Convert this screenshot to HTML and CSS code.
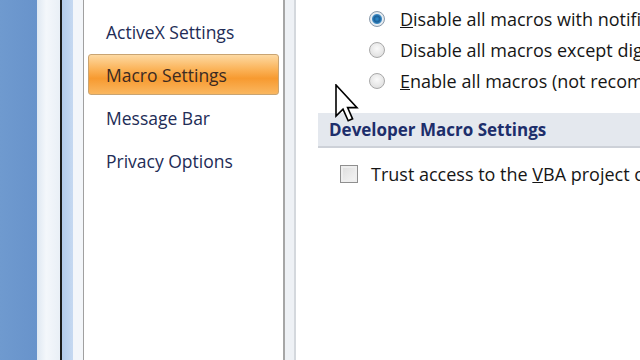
FILE: index.html
```html
<!DOCTYPE html>
<html>
<head>
<meta charset="utf-8">
<link rel="stylesheet" href="styles.css">
</head>
<body>
<div class="screen">
  <div class="desk"></div>
  <div class="frame"></div>
  <div class="darkline"></div>
  <div class="bluestrip"></div>
  <div class="gap"></div>
  <nav class="nav">
    <div class="nav-item">ActiveX Settings</div>
    <div class="nav-item active">Macro Settings</div>
    <div class="nav-item">Message Bar</div>
    <div class="nav-item">Privacy Options</div>
  </nav>
  <div class="splitter"></div>
  <main class="content">
    <div class="radios">
      <div class="radio-row"><span class="radio checked"></span><span class="label"><u>D</u>isable all macros with notifi</span></div>
      <div class="radio-row"><span class="radio"></span><span class="label">Disable all macros except digi</span></div>
      <div class="radio-row"><span class="radio"></span><span class="label"><u>E</u>nable all macros (not recomm</span></div>
    </div>
    <div class="section-head">Developer Macro Settings</div>
    <div class="check-row"><span class="checkbox"></span><span class="label">Trust access to the <u>V</u>BA project o</span></div>
  </main>
  <svg class="cursor" width="24" height="38" viewBox="0 0 12 19">
    <path d="M0.5 0.5 L0.5 16 L4 12.6 L6.6 18.4 L8.8 17.4 L6.3 11.8 L11 11.8 Z" fill="#fff" stroke="#000" stroke-width="0.8" stroke-linejoin="miter"/>
  </svg>
</div>
</body>
</html>
```
FILE: styles.css
```css
html, body { margin: 0; padding: 0; }
body { width: 640px; height: 360px; overflow: hidden; background: #fff; font-family: "Open Sans", "Noto Sans", sans-serif; }
.screen { position: relative; display: flex; height: 360px; }
.desk { width: 37px; background: linear-gradient(90deg, #6f9acf, #6893cb); }
.frame { width: 23px; background: linear-gradient(90deg, #dfe8f2, #f4f7fb 40%, #e9eff6); }
.darkline { width: 2px; background: #1c1c1c; }
.bluestrip { width: 11px; background: linear-gradient(90deg, #b3cbea, #c6d9f1); }
.gap { width: 10px; background: #f3f6fa; }
.nav { width: 199px; background: #fff; border-left: 1px solid #a0a0a0; border-right: 2px solid #a6a6a6; padding-top: 10px; box-sizing: content-box; }
.nav-item { height: 43px; display: flex; align-items: center; padding-left: 18px; margin: 0 4px 0 4px; font-size: 17.5px; color: #222c56; box-sizing: border-box; }
.nav-item.active { background: linear-gradient(180deg, #fdd9a2 0%, #fbb55c 35%, #f79a30 60%, #fab760 100%); border: 1px solid #c9a472; border-radius: 3px; padding-left: 17px; color: #3b2a22; height: 41px; margin-top: 1px; margin-bottom: 1px; }
.splitter { width: 9px; background: #eef1f5; border-right: 2px solid #d4d8dd; }
.content { flex: 1; background: #fff; overflow: hidden; white-space: nowrap; }
.radios { padding: 3px 0 0 73px; }
.radio-row { display: flex; align-items: center; height: 31px; }
.radio { width: 16px; height: 16px; border-radius: 50%; border: 1px solid #a8a8a8; background: radial-gradient(circle at 50% 40%, #fafafa, #d9d9d9); box-sizing: border-box; margin-right: 15px; flex: none; }
.radio.checked { background: radial-gradient(circle, #2d8ecf 0, #1a5f98 3px, #3f8cc4 4.5px, #e8eef3 5.5px, #d2d8de 100%); border-color: #8a9aab; }
.label { font-size: 18px; color: #161616; }
.section-head { margin: 17px 0 0 22px; height: 33px; background: #e4e8ee; border-bottom: 2px solid #cdd1d8; padding-left: 11px; font-weight: bold; font-size: 17px; color: #1d2e6b; line-height: 33px; }
.check-row { display: flex; align-items: center; margin: 14px 0 0 44px; }
.checkbox { width: 18px; height: 18px; border: 1px solid #8f8f8f; background: linear-gradient(135deg, #dcdcdc, #f6f6f6); box-sizing: border-box; margin-right: 13px; box-shadow: inset 0 0 0 2px #eee; flex: none; }
.cursor { position: absolute; left: 335px; top: 84px; }
```
